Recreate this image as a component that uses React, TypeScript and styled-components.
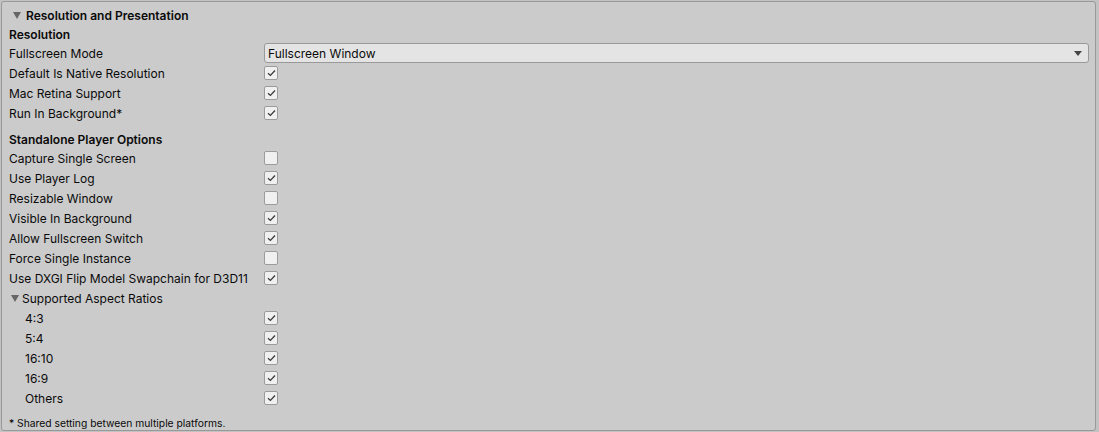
import React from 'react';
import styled, { createGlobalStyle } from 'styled-components';

const GlobalStyle = createGlobalStyle`
    html, body {
        margin: 0;
        padding: 0;
        background: #c2c2c2;
    }
    body {
        font-family: Inter, "Noto Sans", "Liberation Sans", sans-serif;
        font-size: 12px;
        color: #0a0a0a;
    }
`;

const Page = styled.div`
    width: 1099px;
    height: 432px;
    padding: 1px 3px 1px 1px;
    box-sizing: border-box;
`;

const Panel = styled.div`
    height: 100%;
    box-sizing: border-box;
    border: 1px solid #999999;
    border-radius: 3px;
    background: #cbcbcb;
    padding: 3px 6px 0 7px;
    display: flex;
    flex-direction: column;
`;

const Foldout = styled.div<{ $indent?: number; $bold?: boolean }>`
    display: flex;
    align-items: center;
    height: 20px;
    gap: 5px;
    padding-left: ${p => p.$indent ?? 0}px;
    font-weight: ${p => (p.$bold ? 600 : 400)};
`;

const Arrow = styled.span`
    width: 0;
    height: 0;
    border-left: 4px solid transparent;
    border-right: 4px solid transparent;
    border-top: 7px solid #666666;
`;

const SectionLabel = styled.div<{ $top?: number }>`
    height: 18px;
    line-height: 20px;
    font-weight: 600;
    margin-top: ${p => p.$top ?? 0}px;
`;

const Row = styled.div`
    display: grid;
    grid-template-columns: 255px 1fr;
    align-items: center;
    height: 20px;
`;

const Label = styled.span<{ $indent?: number }>`
    padding-left: ${p => p.$indent ?? 0}px;
    white-space: nowrap;
`;

const Box = styled.span`
    width: 12px;
    height: 12px;
    border: 1px solid #9b9b9b;
    border-radius: 2px;
    background: #f0f0f0;
    display: flex;
    align-items: center;
    justify-content: center;
`;

const Dropdown = styled.div`
    height: 18px;
    border: 1px solid #999999;
    border-radius: 3px;
    background: #e4e4e4;
    display: flex;
    align-items: center;
    justify-content: space-between;
    padding: 0 6px 0 3px;
`;

const DropArrow = styled.span`
    width: 0;
    height: 0;
    border-left: 4px solid transparent;
    border-right: 4px solid transparent;
    border-top: 5px solid #444444;
`;

const Footer = styled.div`
    margin-top: 8px;
    font-size: 10.3px;
    height: 14px;
    line-height: 14px;
`;

const Check = () => (
    <svg width="9" height="8" viewBox="0 0 9 8">
        <path d="M1 4.2 L3.4 6.4 L8 1.5" fill="none" stroke="#3a3a3a" strokeWidth="1.3" />
    </svg>
);

const Toggle = ({ label, on, indent }: { label: string; on: boolean; indent?: number }) => (
    <Row>
        <Label $indent={indent}>{label}</Label>
        <Box>{on && <Check />}</Box>
    </Row>
);

const resolution = [
    { label: 'Default Is Native Resolution', on: true },
    { label: 'Mac Retina Support', on: true },
    { label: 'Run In Background*', on: true },
];

const standalone = [
    { label: 'Capture Single Screen', on: false },
    { label: 'Use Player Log', on: true },
    { label: 'Resizable Window', on: false },
    { label: 'Visible In Background', on: true },
    { label: 'Allow Fullscreen Switch', on: true },
    { label: 'Force Single Instance', on: false },
    { label: 'Use DXGI Flip Model Swapchain for D3D11', on: true },
];

const aspects = ['4:3', '5:4', '16:10', '16:9', 'Others'];

export default function App() {
    return (
        <Page>
            <GlobalStyle />
            <Panel>
                <Foldout $indent={4} $bold>
                    <Arrow />
                    <span>Resolution and Presentation</span>
                </Foldout>
                <SectionLabel>Resolution</SectionLabel>
                <Row>
                    <Label>Fullscreen Mode</Label>
                    <Dropdown>
                        <span>Fullscreen Window</span>
                        <DropArrow />
                    </Dropdown>
                </Row>
                {resolution.map(r => <Toggle key={r.label} label={r.label} on={r.on} />)}
                <SectionLabel $top={7}>Standalone Player Options</SectionLabel>
                {standalone.map(r => <Toggle key={r.label} label={r.label} on={r.on} />)}
                <Foldout $indent={2}>
                    <Arrow />
                    <span style={{ marginLeft: -2 }}>Supported Aspect Ratios</span>
                </Foldout>
                {aspects.map(a => <Toggle key={a} label={a} on indent={16} />)}
                <Footer>* Shared setting between multiple platforms.</Footer>
            </Panel>
        </Page>
    );
}
